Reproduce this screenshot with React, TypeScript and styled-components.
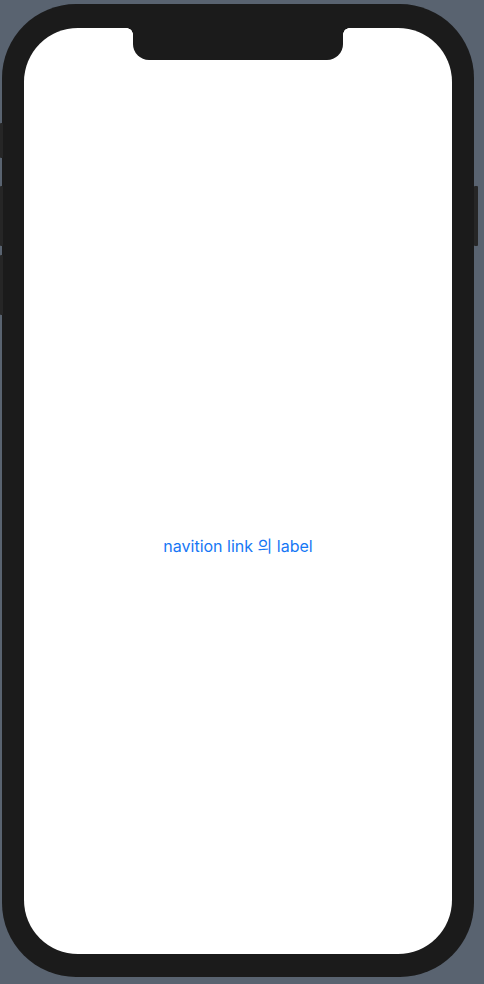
import styled, { createGlobalStyle } from 'styled-components'

const GlobalStyle = createGlobalStyle`
    html, body {
        margin: 0;
        padding: 0;
        background: #596370;
    }
`;

const Stage = styled.div`
    display: flex;
    width: 484px;
    height: 984px;
    padding: 4px 0 0 2px;
    box-sizing: border-box;
`;

// Device body with the side keys hanging off its edges
const Frame = styled.div`
    position: relative;
    width: 472px;
    height: 973px;
    padding: 24px 22px 23px 22px;
    box-sizing: border-box;
    background: #1b1b1b;
    border-radius: 74px;
`;

const SideKey = styled.div<{ $side: 'left' | 'right'; $top: number; $height: number }>`
    position: absolute;
    top: ${p => p.$top}px;
    height: ${p => p.$height}px;
    width: ${p => (p.$side === 'left' ? 3 : 4)}px;
    ${p => (p.$side === 'left' ? 'left: -2px;' : 'right: -4px;')}
    background: #262626;
    border-radius: 1px;
`;

const Screen = styled.div`
    position: relative;
    display: flex;
    flex-direction: column;
    align-items: center;
    justify-content: center;
    height: 100%;
    padding-top: 108px;
    box-sizing: border-box;
    background: #ffffff;
    border-radius: 54px;
    overflow: hidden;
`;

const Notch = styled.div`
    position: absolute;
    top: 0;
    left: 50%;
    transform: translateX(-50%);
    width: 210px;
    height: 32px;
    background: #1b1b1b;
    border-radius: 0 0 16px 16px;

    &::before,
    &::after {
        content: '';
        position: absolute;
        top: 0;
        width: 6px;
        height: 6px;
    }

    &::before {
        left: -6px;
        background: radial-gradient(circle at 0 100%, transparent 5.5px, #1b1b1b 6px);
    }

    &::after {
        right: -6px;
        background: radial-gradient(circle at 100% 100%, transparent 5.5px, #1b1b1b 6px);
    }
`;

const NavLink = styled.a`
    font-family: Inter, "Noto Sans CJK KR", sans-serif;
    font-size: 16px;
    color: #1677f5;
    text-decoration: none;
    cursor: pointer;
`;

const App = () => {
    return (
        <>
            <GlobalStyle />
            <Stage>
                <Frame>
                    <SideKey $side="left" $top={119} $height={35} />
                    <SideKey $side="left" $top={182} $height={60} />
                    <SideKey $side="left" $top={251} $height={60} />
                    <SideKey $side="right" $top={182} $height={60} />
                    <Screen>
                        <Notch />
                        <NavLink>navition link 의 label</NavLink>
                    </Screen>
                </Frame>
            </Stage>
        </>
    );
}

export default App;
